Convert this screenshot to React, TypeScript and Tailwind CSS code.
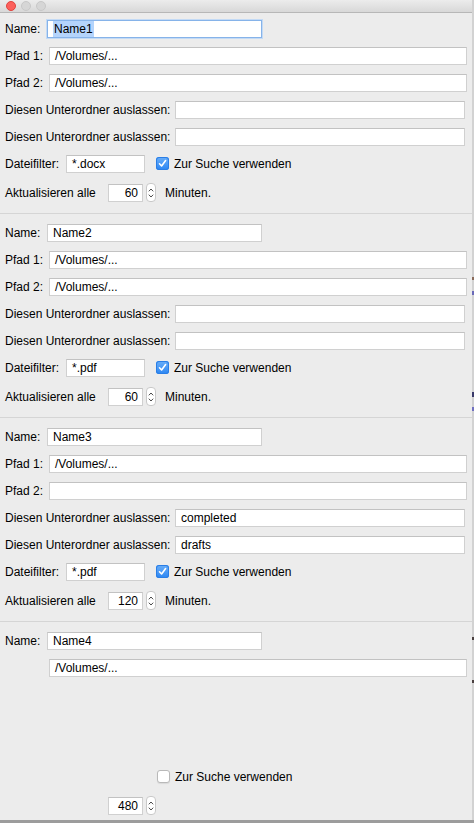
import clsx from 'clsx';

type FieldProps = {
  value?: string;
  className?: string;
  right?: boolean;
  focused?: boolean;
};

function Field({ value = '', className, right, focused }: FieldProps) {
  return (
    <div
      className={clsx(
        'flex h-[18px] items-center border bg-white text-[12px] leading-none text-black',
        focused
          ? 'border-[#86b3e9] shadow-[0_0_0_1px_#c3daf5]'
          : 'border-[#d0d0d0] border-t-[#c2c2c2]',
        right ? 'justify-end pr-[4px]' : 'pl-[5px]',
        className,
      )}
    >
      {focused ? (
        <span className="bg-[#b4d4fc] px-[1px] py-[2px]">{value}</span>
      ) : (
        value
      )}
    </div>
  );
}

function Checkbox({ checked }: { checked?: boolean }) {
  if (checked) {
    return (
      <div className="flex h-[13px] w-[13px] items-center justify-center rounded-[3px] bg-gradient-to-b from-[#69aef8] to-[#2a86f3] shadow-[inset_0_0_0_1px_#2a7ee6]">
        <svg width="9" height="9" viewBox="0 0 9 9" fill="none">
          <path
            d="M1.5 4.8 L3.6 7 L7.6 1.6"
            stroke="white"
            strokeWidth="1.6"
            strokeLinecap="round"
            strokeLinejoin="round"
          />
        </svg>
      </div>
    );
  }
  return (
    <div className="h-[13px] w-[13px] rounded-[3px] border border-[#b9b9b9] bg-white shadow-[0_1px_1px_rgba(0,0,0,0.08)]" />
  );
}

function Stepper() {
  return (
    <div className="flex h-[19px] w-[10px] flex-col items-center justify-center gap-[2px] rounded-[4px] border border-[#c9c9c9] bg-white">
      <svg width="6" height="4" viewBox="0 0 6 4" fill="none">
        <path d="M0.8 3.3 L3 1 L5.2 3.3" stroke="#4a4a4a" strokeWidth="1" />
      </svg>
      <svg width="6" height="4" viewBox="0 0 6 4" fill="none">
        <path d="M0.8 0.7 L3 3 L5.2 0.7" stroke="#4a4a4a" strokeWidth="1" />
      </svg>
    </div>
  );
}

function Row({ children, className }: { children?: React.ReactNode; className?: string }) {
  return (
    <div className={clsx('flex h-[27px] shrink-0 items-center pl-[5px]', className)}>
      {children}
    </div>
  );
}

function Label({ text, w }: { text: string; w: string }) {
  return <span className={clsx('shrink-0 whitespace-nowrap', w)}>{text}</span>;
}

type Entry = {
  name: string;
  pfad1: string;
  pfad2: string;
  skip1: string;
  skip2: string;
  filter: string;
  minutes: string;
  focused?: boolean;
};

const entries: Entry[] = [
  { name: 'Name1', pfad1: '/Volumes/...', pfad2: '/Volumes/...', skip1: '', skip2: '', filter: '*.docx', minutes: '60', focused: true },
  { name: 'Name2', pfad1: '/Volumes/...', pfad2: '/Volumes/...', skip1: '', skip2: '', filter: '*.pdf', minutes: '60' },
  { name: 'Name3', pfad1: '/Volumes/...', pfad2: '', skip1: 'completed', skip2: 'drafts', filter: '*.pdf', minutes: '120' },
];

function Section({ e, first }: { e: Entry; first?: boolean }) {
  return (
    <section
      className={clsx(
        'flex shrink-0 flex-col pb-[7px]',
        first ? 'pt-[2px]' : 'border-t border-[#d5d5d5] pt-[5px]',
      )}
    >
      <Row>
        <Label text="Name:" w="w-[42px]" />
        <Field value={e.name} focused={e.focused} className="w-[215px]" />
      </Row>
      <Row>
        <Label text="Pfad 1:" w="w-[44px]" />
        <Field value={e.pfad1} className="mr-[5px] flex-1" />
      </Row>
      <Row>
        <Label text="Pfad 2:" w="w-[44px]" />
        <Field value={e.pfad2} className="mr-[5px] flex-1" />
      </Row>
      <Row>
        <Label text="Diesen Unterordner auslassen:" w="w-[170px]" />
        <Field value={e.skip1} className="mr-[7px] flex-1" />
      </Row>
      <Row>
        <Label text="Diesen Unterordner auslassen:" w="w-[170px]" />
        <Field value={e.skip2} className="mr-[7px] flex-1" />
      </Row>
      <Row>
        <Label text="Dateifilter:" w="w-[61px]" />
        <Field value={e.filter} className="w-[79px]" />
        <div className="ml-[11px]">
          <Checkbox checked />
        </div>
        <span className="ml-[5px]">Zur Suche verwenden</span>
      </Row>
      <Row className="mt-[2px]">
        <Label text="Aktualisieren alle" w="w-[103px]" />
        <Field value={e.minutes} right className="w-[35px]" />
        <div className="ml-[3px]">
          <Stepper />
        </div>
        <span className="ml-[9px]">Minuten.</span>
      </Row>
    </section>
  );
}

function LastSection() {
  return (
    <section className="flex flex-1 flex-col border-t border-[#d5d5d5] pt-[5px]">
      <Row>
        <Label text="Name:" w="w-[42px]" />
        <Field value="Name4" className="w-[215px]" />
      </Row>
      <Row>
        <span className="w-[44px] shrink-0" />
        <Field value="/Volumes/..." className="mr-[5px] flex-1" />
      </Row>
      <Row />
      <Row />
      <Row />
      <Row className="mt-[1px]">
        <span className="w-[152px] shrink-0" />
        <Checkbox />
        <span className="ml-[5px]">Zur Suche verwenden</span>
      </Row>
      <Row className="mt-[2px]">
        <span className="w-[103px] shrink-0" />
        <Field value="480" right className="w-[35px]" />
        <div className="ml-[3px]">
          <Stepper />
        </div>
      </Row>
    </section>
  );
}

export default function App() {
  return (
    <div className="flex h-[823px] w-[474px] flex-col overflow-hidden bg-[#9c9c9c] font-['Liberation_Sans',Arial,sans-serif] text-[12px] text-black">
      <div className="flex h-[820px] shrink-0">
        <div className="flex w-[472px] shrink-0 flex-col bg-[#ececec]">
          <div className="flex h-[13px] shrink-0 items-center gap-[5px] border-b border-[#b7b7b7] bg-gradient-to-b from-[#ececec] to-[#d8d8d8] pl-[6px]">
            <div className="h-[10px] w-[10px] rounded-full border border-[#e0443e] bg-[#fc605c]" />
            <div className="h-[10px] w-[10px] rounded-full border border-[#c8c8c8] bg-[#d6d6d6]" />
            <div className="h-[10px] w-[10px] rounded-full border border-[#c8c8c8] bg-[#d6d6d6]" />
          </div>
          {entries.map((e, i) => (
            <Section key={e.name} e={e} first={i === 0} />
          ))}
          <LastSection />
        </div>
        <div className="flex w-[2px] shrink-0 flex-col bg-[#d2d2d2]">
          <div className="mt-[277px] h-[3px] bg-[#8a6a5a]" />
          <div className="mt-[11px] h-[4px] bg-[#6a6ab8]" />
          <div className="mt-[97px] h-[5px] bg-[#3a3a6a]" />
          <div className="mt-[10px] h-[4px] bg-[#7070c0]" />
          <div className="mt-[226px] h-[3px] bg-[#4a4040]" />
          <div className="mt-[40px] h-[3px] bg-[#4a4040]" />
        </div>
      </div>
    </div>
  );
}
